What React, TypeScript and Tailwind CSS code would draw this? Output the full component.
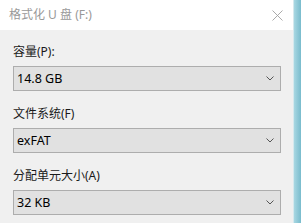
export default function App() {
  const fields = [
    { label: "容量(P):", value: "14.8 GB" },
    { label: "文件系统(F)", value: "exFAT" },
    { label: "分配单元大小(A)", value: "32 KB" },
  ];

  return (
    <div
      className="flex w-[301px] h-[223px] overflow-hidden text-[12px]"
      style={{ fontFamily: '"Noto Sans", "Noto Sans CJK SC", sans-serif' }}
    >
      <div className="flex flex-col w-[293px] h-full bg-[#f0f0f0]">
        {/* Title bar */}
        <div className="flex items-center justify-between h-[30px] bg-white pl-[9px] pr-[9px] shrink-0">
          <span className="text-[#999999] leading-[16px]">格式化 U 盘 (F:)</span>
          <svg width="11" height="11" viewBox="0 0 11 11" className="mr-[1px]">
            <path d="M0.5 0.5 L10.5 10.5 M10.5 0.5 L0.5 10.5" stroke="#a0a0a0" strokeWidth="0.9" fill="none" />
          </svg>
        </div>

        {/* Fields */}
        <div className="flex flex-col pl-[13px] pr-[12px] pt-[14px]">
          {fields.map((f, i) => (
            <div key={f.label} className={i === 0 ? "flex flex-col" : "flex flex-col mt-[15px]"}>
              <span className="leading-[16px] text-[#1a1a1a]">{f.label}</span>
              <div className="mt-[6px] flex items-center justify-between h-[25px] border border-[#adadad] bg-[#e1e1e1] pl-[3px] pr-[6px]">
                <span className="leading-[16px] text-[12.5px] text-black">{f.value}</span>
                <svg width="8" height="5" viewBox="0 0 8 5">
                  <path d="M0.5 0.5 L4 4 L7.5 0.5" stroke="#555" strokeWidth="1" fill="none" />
                </svg>
              </div>
            </div>
          ))}
        </div>
      </div>

      {/* Right edge of background window */}
      <div className="w-[8px] h-full border-l border-[#d4e9ee] bg-gradient-to-r from-[#a8d7e2] to-[#79bccd]" />
    </div>
  );
}
